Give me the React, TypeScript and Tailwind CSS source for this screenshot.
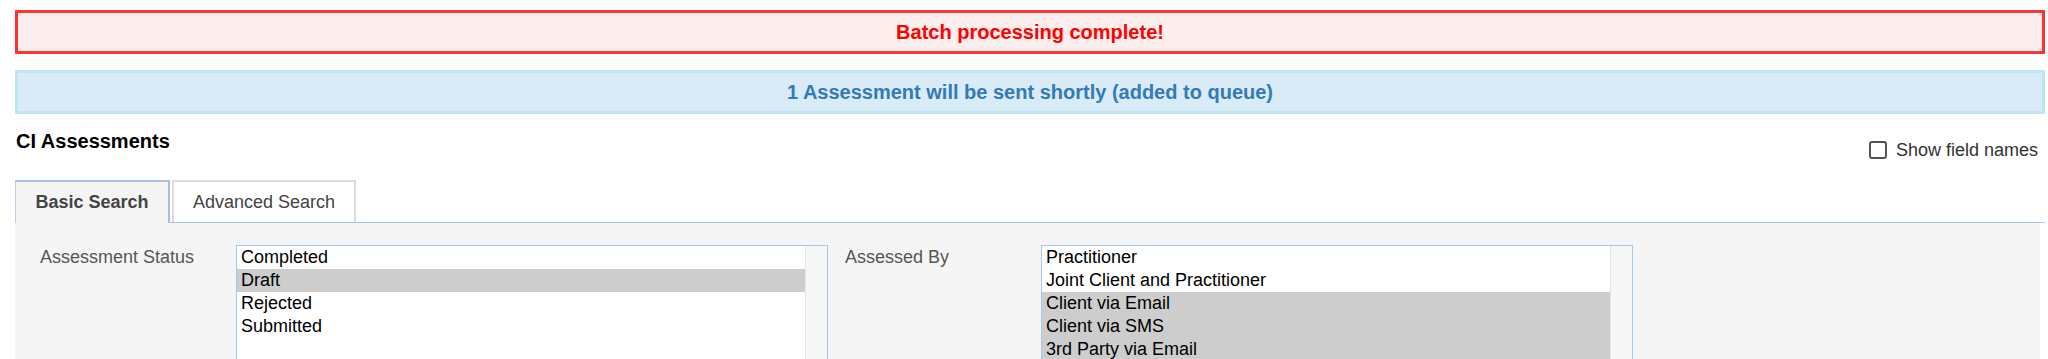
import React from "react";

const statusOptions = [
  { label: "Completed", selected: false },
  { label: "Draft", selected: true },
  { label: "Rejected", selected: false },
  { label: "Submitted", selected: false },
];

const assessedOptions = [
  { label: "Practitioner", selected: false },
  { label: "Joint Client and Practitioner", selected: false },
  { label: "Client via Email", selected: true },
  { label: "Client via SMS", selected: true },
  { label: "3rd Party via Email", selected: true },
];

function ListBox({ options, width }: { options: { label: string; selected: boolean }[]; width: string }) {
  return (
    <div className={`${width} h-[140px] border border-[#a6c8ea] bg-white flex shrink-0`}>
      <div className="flex-1 flex flex-col">
        {options.map((o) => (
          <div
            key={o.label}
            className={`h-[23px] leading-[23px] pl-[4px] text-[18px] text-black whitespace-nowrap ${o.selected ? "bg-[#cdcdcd]" : "bg-white"}`}
          >
            {o.label}
          </div>
        ))}
      </div>
      <div className="w-[22px] bg-[#f7f7f7] border-l border-[#e6e6e6]" />
    </div>
  );
}

export default function App() {
  return (
    <div className="w-[2048px] h-[359px] overflow-hidden bg-white font-['Liberation_Sans',Arial,sans-serif]">
      <div className="pl-[15px] pr-[3px] pt-[10px]">
        <div className="h-[44px] border-[3px] border-[#ff3333] bg-[#fdeeee] flex items-center justify-center text-[20px] font-bold text-[#ff0000]">
          Batch processing complete!
        </div>
        <div className="mt-[16px] h-[44px] border-[3px] border-[#bde6f1] bg-[#d9ebf6] flex items-center justify-center text-[20px] font-bold text-[#337ab7]">
          1 Assessment will be sent shortly (added to queue)
        </div>
        <div className="h-[66px] flex justify-between items-start pt-[15px]">
          <h1 className="pl-[1px] text-[20px] leading-[24px] font-bold text-black">CI Assessments</h1>
          <label className="mt-[10px] pr-[7px] flex items-center gap-[9px] text-[18px] leading-[22px] text-[#333]">
            <span className="w-[18px] h-[18px] border-2 border-[#555] rounded-[3px] bg-white" />
            Show field names
          </label>
        </div>
        <div className="h-[43px] flex items-end border-b border-[#a7c2dc]">
          <div className="w-[155px] h-[43px] -mb-px bg-[#f5f5f5] border-l border-t-2 border-r-2 border-l-[#b9d0e6] border-t-[#a9c3dc] border-r-[#a3c0dc] flex items-center justify-center text-[18px] font-bold text-[#444]">
            Basic Search
          </div>
          <div className="ml-[2px] w-[184px] h-[42px] bg-white border-2 border-b-0 border-[#dddddd] flex items-center justify-center text-[18px] text-[#444]">
            Advanced Search
          </div>
        </div>
        <div className="mr-[5px] bg-[#f5f5f5] pt-[22px] pl-[25px] h-[200px]">
          <div className="flex items-start">
            <div className="w-[196px] pt-px text-[18px] leading-[23px] text-[#555] shrink-0">Assessment Status</div>
            <ListBox options={statusOptions} width="w-[592px]" />
            <div className="ml-[17px] w-[196px] pt-px text-[18px] leading-[23px] text-[#555] shrink-0">Assessed By</div>
            <ListBox options={assessedOptions} width="w-[592px]" />
          </div>
        </div>
      </div>
    </div>
  );
}
